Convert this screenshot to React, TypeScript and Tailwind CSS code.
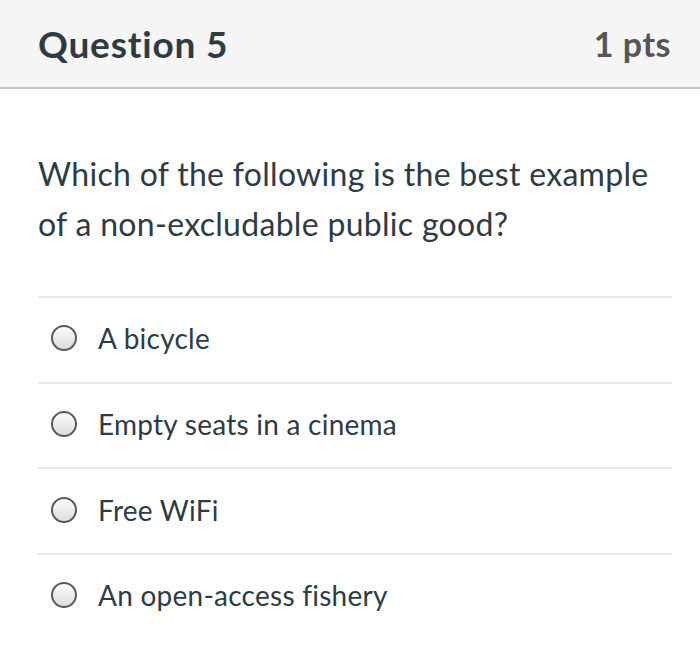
const answers = [
  'A bicycle',
  'Empty seats in a cinema',
  'Free WiFi',
  'An open-access fishery',
];

function Radio() {
  return (
    <span className="ml-[13px] h-[26px] w-[26px] shrink-0 rounded-full border-[2.5px] border-[#5a5a5a] bg-gradient-to-b from-[#fdfdfd] to-[#dcdcdc]" />
  );
}

export default function App() {
  return (
    <div className="min-h-[663px] w-[700px] bg-white font-['Lato','Liberation_Sans',sans-serif] text-[#2d3b45]">
      <div className="flex h-[89px] items-center justify-between border-b-2 border-[#c4c4c4] bg-[#f5f5f5] pl-[38px] pr-[29px]">
        <h2 className="text-[37px] font-bold leading-none tracking-[0.8px]">Question 5</h2>
        <span className="text-[34px] font-bold leading-none tracking-[0.5px] text-[#555555]">1 pts</span>
      </div>

      <div className="pl-[38px] pr-[28px]">
        <p className="mt-[60px] text-[32px] leading-[50px] tracking-[0.3px]">
          Which of the following is the best example
          <br />
          of a non-excludable public good?
        </p>

        <div className="mt-[47px]">
          {answers.map((answer) => (
            <label
              key={answer}
              className="flex h-[85.7px] items-center gap-[21px] border-t-2 border-[#e6e6e6] pb-[3px]"
            >
              <Radio />
              <span className="text-[28px] tracking-[0.25px]">{answer}</span>
            </label>
          ))}
        </div>
      </div>
    </div>
  );
}
